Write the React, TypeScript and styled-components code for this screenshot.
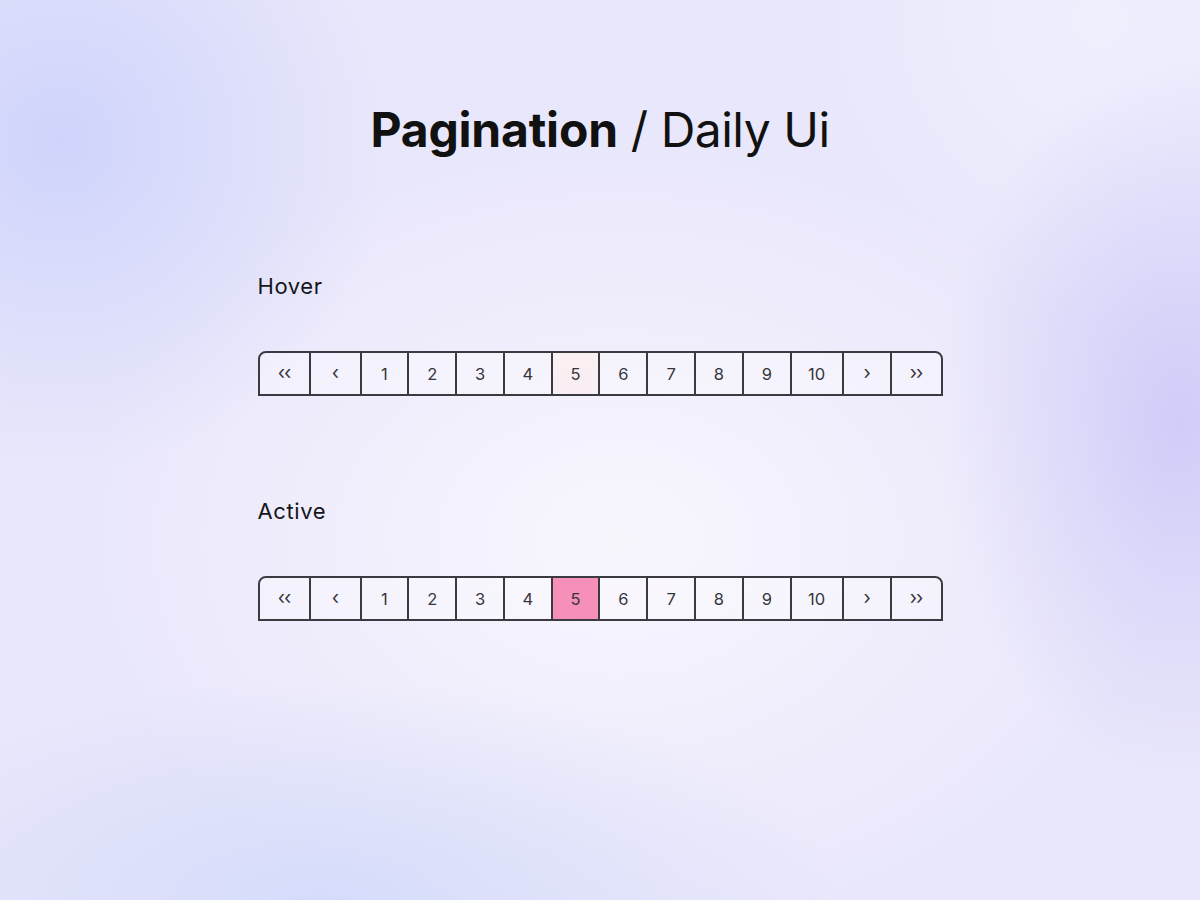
import styled, { createGlobalStyle, css } from 'styled-components'

const GlobalStyle = createGlobalStyle`
    *{
        box-sizing: border-box;
    }
    body{
        margin: 0;
        font-family: Inter, "Noto Sans", sans-serif;
        color: #111;
    }
`

const Page = styled.main`
    min-height: 100vh;
    padding-top: 101px;
    background:
        radial-gradient(circle at 60px 140px, rgba(204, 210, 251, 0.9) 0, rgba(204, 210, 251, 0) 330px),
        radial-gradient(ellipse 240px 360px at 1180px 420px, rgba(204, 200, 248, 0.85) 0, rgba(204, 200, 248, 0) 100%),
        radial-gradient(ellipse 520px 220px at 320px 900px, rgba(210, 218, 250, 0.85) 0, rgba(210, 218, 250, 0) 100%),
        radial-gradient(ellipse 540px 400px at 620px 540px, #f8f6fd 0, rgba(248, 246, 253, 0) 100%),
        radial-gradient(circle at 1100px 20px, #eef0fe 0, rgba(238, 240, 254, 0) 300px),
        #e9e7fb;
`

const Title = styled.h1`
    margin: 0;
    text-align: center;
    font-size: 48px;
    line-height: 58px;
    font-weight: 400;
    letter-spacing: -0.5px;
    strong{
        font-weight: 700;
        letter-spacing: -0.2px;
    }
`

const Content = styled.section`
    width: 685px;
    margin: 0 auto;
    padding-top: 114px;
`

const Block = styled.div`
    & + &{
        margin-top: 102px;
    }
`

const Label = styled.h2`
    margin: 0 0 52px;
    font-size: 22px;
    line-height: 26px;
    font-weight: 400;
    letter-spacing: 0.6px;
    color: #15151a;
`

const Strip = styled.nav`
    display: flex;
    height: 45px;
    border: 2px solid #3b3a41;
    border-radius: 8px 8px 0 0;
    overflow: hidden;
`

type CellProps = { $w: number; $state?: 'hover' | 'active' }

const Cell = styled.button<CellProps>`
    flex: 0 0 ${p => p.$w}px;
    display: flex;
    align-items: center;
    justify-content: center;
    padding: 0;
    border: none;
    border-right: 2px solid #3b3a41;
    background: rgba(255, 255, 255, 0.32);
    font-family: Inter, "Noto Sans", sans-serif;
    font-size: 16.5px;
    font-weight: 400;
    color: #36353b;
    cursor: pointer;
    &:last-child{
        flex: 1;
        border-right: none;
    }
    ${p => p.$state === 'hover' && css`
        background: linear-gradient(180deg, #fbf1f1 0%, #f8eef4 100%);
    `}
    ${p => p.$state === 'active' && css`
        background: #f68fba;
    `}
`

const Arrow = styled.span`
    font-size: 19px;
    line-height: 1;
    margin-top: -3px;
    letter-spacing: -1px;
`

const items: { key: string; label: string; w: number; arrow?: boolean }[] = [
    { key: 'first', label: '‹‹', w: 51, arrow: true },
    { key: 'prev', label: '‹', w: 51, arrow: true },
    ...Array.from({ length: 9 }, (_, i) => ({ key: String(i + 1), label: String(i + 1), w: 47.8 })),
    { key: '10', label: '10', w: 52 },
    { key: 'next', label: '›', w: 48, arrow: true },
    { key: 'last', label: '››', w: 50, arrow: true },
]

const Pagination = ({ state }: { state: 'hover' | 'active' }) => (
    <Strip>
        {items.map(item => (
            <Cell key={item.key} $w={item.w} $state={item.key === '5' ? state : undefined}>
                {item.arrow ? <Arrow>{item.label}</Arrow> : item.label}
            </Cell>
        ))}
    </Strip>
)

const App = () => {
    return (
        <>
            <GlobalStyle />
            <Page>
                <Title><strong>Pagination</strong> / Daily Ui</Title>
                <Content>
                    <Block>
                        <Label>Hover</Label>
                        <Pagination state="hover" />
                    </Block>
                    <Block>
                        <Label>Active</Label>
                        <Pagination state="active" />
                    </Block>
                </Content>
            </Page>
        </>
    )
}

export default App
